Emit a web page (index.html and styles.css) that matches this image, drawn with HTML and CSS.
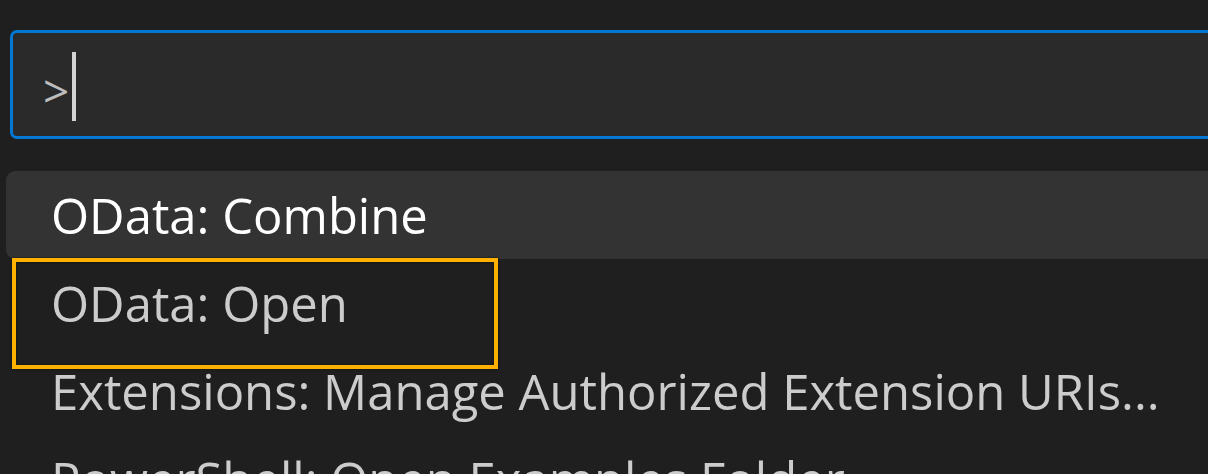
FILE: index.html
```html
<!DOCTYPE html>
<html>
<head>
<meta charset="utf-8">
<link rel="stylesheet" href="styles.css">
</head>
<body>
<div class="palette">
  <div class="input"><span class="prompt">&gt;</span><span class="caret"></span></div>
  <div class="list">
    <div class="row active">OData: Combine</div>
    <div class="row">OData: Open</div>
    <div class="row">Extensions: Manage Authorized Extension URIs...</div>
    <div class="row">PowerShell: Open Examples Folder</div>
    <div class="highlight"></div>
  </div>
</div>
</body>
</html>
```
FILE: styles.css
```css
html, body {
  margin: 0;
  padding: 0;
  background: #1f1f1f;
  overflow: hidden;
  height: 474px;
}
.palette {
  padding: 30px 0 0 0;
  font-family: "Open Sans", "Noto Sans", sans-serif;
}
.input {
  margin-left: 10px;
  width: 1260px;
  height: 103px;
  border: 3.5px solid #0078d4;
  border-radius: 7px;
  background: #2a2a2a;
  display: flex;
  align-items: center;
  padding-left: 30px;
  box-sizing: content-box;
}
.prompt {
  color: #bdbdbd;
  font-size: 46px;
  line-height: 1;
  margin-top: 10px;
}
.caret {
  width: 3.5px;
  height: 69px;
  background: #d4d4d4;
  margin-left: 3px;
  margin-top: 4px;
}
.list {
  position: relative;
  margin-top: 32px;
}
.row {
  height: 88px;
  display: flex;
  align-items: center;
  padding-left: 51px;
  color: #cccccc;
  font-size: 49px;
  white-space: nowrap;
}
.row.active {
  margin-left: 6px;
  padding-left: 45px;
  background: #333333;
  border-radius: 9px 0 0 9px;
  color: #ffffff;
}
.highlight {
  position: absolute;
  left: 12px;
  top: 87px;
  width: 478px;
  height: 103px;
  border: 4.5px solid #ffb000;
  box-shadow: inset 0 0 0 1.5px #1a1a1a, 0 0 2px rgba(0,0,0,0.6);
}
```
